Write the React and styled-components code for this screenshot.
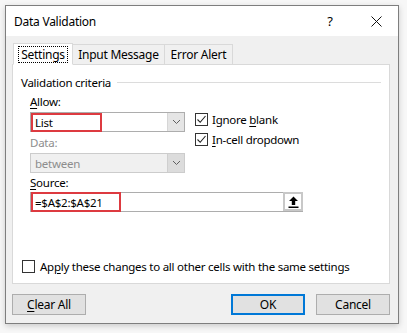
import React from "react";
import styled, { createGlobalStyle } from "styled-components";

const GlobalStyle = createGlobalStyle`
  html, body { margin: 0; padding: 0; background: #f7f7f7; }
  body {
    font-family: "Noto Sans", "Open Sans", "Liberation Sans", sans-serif;
    font-size: 11.5px;
    letter-spacing: -0.25px;
    color: #000;
  }
`;

const Stage = styled.div`
  width: 407px;
  height: 333px;
  padding: 5px 0 0 5px;
  box-sizing: border-box;
`;

const Window = styled.div`
  width: 394px;
  height: 319px;
  box-sizing: border-box;
  border: 1px solid #7e7e7e;
  background: #f0f0f0;
  box-shadow: 0 2px 6px rgba(0, 0, 0, 0.18);
  display: flex;
  flex-direction: column;
`;

const TitleBar = styled.div`
  height: 30px;
  background: #fff;
  display: flex;
  align-items: center;
  padding-left: 8px;
  padding-right: 6px;
`;

const Title = styled.span`
  flex: 1;
  font-size: 12px;
`;

const TitleButton = styled.span`
  display: flex;
  align-items: center;
  justify-content: center;
  width: ${({ w }) => w}px;
  font-size: 13px;
`;

const Body = styled.div`
  flex: 1;
  padding: 6px 8px 0 6px;
  display: flex;
  flex-direction: column;
`;

const Tabs = styled.div`
  display: flex;
  align-items: flex-end;
  height: 22px;
  padding-left: 1px;
  position: relative;
  z-index: 1;
`;

const Tab = styled.div`
  box-sizing: border-box;
  height: ${({ active }) => (active ? 22 : 20)}px;
  width: ${({ w }) => w}px;
  border: 1px solid #d9d9d9;
  border-bottom: ${({ active }) => (active ? "1px solid #fff" : "none")};
  background: ${({ active }) => (active ? "#fff" : "#f0f0f0")};
  margin-left: ${({ active }) => (active ? 0 : -1)}px;
  margin-bottom: ${({ active }) => (active ? -1 : 0)}px;
  display: flex;
  align-items: center;
  justify-content: center;
  font-size: 12px;
`;

const FocusText = styled.span`
  outline: 1px dotted #000;
  padding: 0 2px;
  line-height: 15px;
`;

const Panel = styled.div`
  height: 220px;
  box-sizing: border-box;
  border: 1px solid #d9d9d9;
  background: #fff;
  display: flex;
  flex-direction: column;
  padding: 10px 8px 0 8px;
`;

const Legend = styled.div`
  display: flex;
  align-items: center;
  height: 14px;
  &::after {
    content: "";
    flex: 1;
    height: 1px;
    background: #dcdcdc;
    margin-left: 6px;
  }
`;

const Criteria = styled.div`
  padding-left: 9px;
  display: flex;
  flex-direction: column;
`;

const Label = styled.div`
  height: 14px;
  line-height: 14px;
  margin-top: ${({ mt }) => mt}px;
  margin-bottom: ${({ mb }) => mb}px;
  color: ${({ disabled }) => (disabled ? "#8d8d8d" : "#000")};
`;

const U = styled.span`
  text-decoration: underline;
  text-underline-offset: 2px;
`;

const Row = styled.div`
  display: flex;
  align-items: flex-start;
  height: 20px;
`;

const Combo = styled.div`
  position: relative;
  flex: none;
  box-sizing: border-box;
  width: ${({ w }) => w}px;
  height: 20px;
  border: 1px solid ${({ disabled }) => (disabled ? "#cccccc" : "#adadad")};
  background: ${({ disabled }) => (disabled ? "#f0f0f0" : "#fff")};
  display: flex;
  align-items: center;
  color: ${({ disabled }) => (disabled ? "#8d8d8d" : "#000")};
`;

const ComboText = styled.span`
  flex: 1;
  padding-left: 4px;
`;

const DropButton = styled.span`
  width: 16px;
  height: 18px;
  background: ${({ disabled }) => (disabled ? "#dcdcdc" : "#e5e5e5")};
  border-left: 1px solid ${({ disabled }) => (disabled ? "#cfcfcf" : "#d6d6d6")};
  display: flex;
  align-items: center;
  justify-content: center;
`;

const Highlight = styled.span`
  position: absolute;
  left: 0;
  top: ${({ t }) => t}px;
  width: ${({ w }) => w}px;
  height: ${({ h }) => h}px;
  box-sizing: border-box;
  border: 2px solid #dd3a40;
  pointer-events: none;
`;

const CheckGroup = styled.div`
  margin-left: 10px;
  margin-top: 1px;
  display: flex;
  flex-direction: column;
  gap: 7px;
`;

const CheckLine = styled.label`
  display: flex;
  align-items: center;
  height: 13px;
`;

const Box = styled.span`
  flex: none;
  width: 13px;
  height: 13px;
  box-sizing: border-box;
  border: 1px solid #333;
  background: #fff;
  display: flex;
  align-items: center;
  justify-content: center;
  margin-right: ${({ gap }) => gap}px;
`;

const RefButton = styled.span`
  width: 20px;
  height: 19px;
  box-sizing: border-box;
  margin: -1px -1px 0 0;
  border: 2px solid #c8c8c8;
  background: #fff;
  display: flex;
  align-items: center;
  justify-content: center;
`;

const Spacer = styled.div`
  flex: 1;
`;

const ApplyLine = styled(CheckLine)`
  padding-left: 1px;
  margin-bottom: 10px;
`;

const Footer = styled.div`
  display: flex;
  margin-top: 10px;
`;

const Button = styled.button`
  width: 74px;
  height: 21px;
  box-sizing: border-box;
  background: #e1e1e1;
  border: ${({ primary }) => (primary ? "2px solid #0078d7" : "1px solid #adadad")};
  font-family: inherit;
  font-size: 12px;
  letter-spacing: -0.25px;
  color: #000;
  padding: 0;
  margin-left: ${({ ml }) => ml || 0}px;
`;

const Chevron = () => (
  <svg width="9" height="6" viewBox="0 0 9 6">
    <path d="M1 1 L4.5 4.5 L8 1" fill="none" stroke="#606060" strokeWidth="1" />
  </svg>
);

const Tick = () => (
  <svg width="11" height="11" viewBox="0 0 11 11">
    <path d="M1.5 5.5 L4.2 8.3 L9.5 2" fill="none" stroke="#222" strokeWidth="1.1" />
  </svg>
);

const Check = ({ checked, children, gap = 4 }) => (
  <>
    <Box gap={gap}>{checked && <Tick />}</Box>
    {children}
  </>
);

export default function App() {
  return (
    <Stage>
      <GlobalStyle />
      <Window>
        <TitleBar>
          <Title>Data Validation</Title>
          <TitleButton w={60}>?</TitleButton>
          <TitleButton w={32}>
            <svg width="11" height="11" viewBox="0 0 11 11">
              <path d="M0.5 0.5 L10.5 10.5 M10.5 0.5 L0.5 10.5" stroke="#111" strokeWidth="1" />
            </svg>
          </TitleButton>
        </TitleBar>
        <Body>
          <Tabs>
            <Tab active w={60}>
              <FocusText>Settings</FocusText>
            </Tab>
            <Tab w={93}>Input Message</Tab>
            <Tab w={69}>Error Alert</Tab>
          </Tabs>
          <Panel>
            <Legend>Validation criteria</Legend>
            <Criteria>
              <Label mt={6} mb={3}>
                <U>A</U>llow:
              </Label>
              <Row>
                <Combo w={155}>
                  <ComboText>List</ComboText>
                  <DropButton>
                    <Chevron />
                  </DropButton>
                  <Highlight t={0} w={71} h={19} />
                </Combo>
                <CheckGroup>
                  <CheckLine>
                    <Check checked>
                      <span>
                        Ignore <U>b</U>lank
                      </span>
                    </Check>
                  </CheckLine>
                  <CheckLine>
                    <Check checked>
                      <span>
                        <U>I</U>n-cell dropdown
                      </span>
                    </Check>
                  </CheckLine>
                </CheckGroup>
              </Row>
              <Label disabled mt={4} mb={3}>
                Data:
              </Label>
              <Combo w={155} disabled>
                <ComboText>between</ComboText>
                <DropButton disabled>
                  <Chevron />
                </DropButton>
              </Combo>
              <Label mt={3} mb={2}>
                <U>S</U>ource:
              </Label>
              <Combo w={273}>
                <ComboText>=$A$2:$A$21</ComboText>
                <RefButton>
                  <svg width="11" height="12" viewBox="0 0 11 12">
                    <path d="M5.5 0.5 L1 5 H3.8 V9 H7.2 V5 H10 Z" fill="#000" />
                    <rect x="0.5" y="10.5" width="10" height="1.5" fill="#000" />
                  </svg>
                </RefButton>
                <Highlight t={-1} w={90} h={20} />
              </Combo>
            </Criteria>
            <Spacer />
            <ApplyLine>
              <Check gap={5}>
                <span>
                  Ap<U>p</U>ly these changes to all other cells with the same settings
                </span>
              </Check>
            </ApplyLine>
          </Panel>
          <Footer>
            <Button>
              <U>C</U>lear All
            </Button>
            <Spacer />
            <Button primary>OK</Button>
            <Button ml={11}>Cancel</Button>
          </Footer>
        </Body>
      </Window>
    </Stage>
  );
}
